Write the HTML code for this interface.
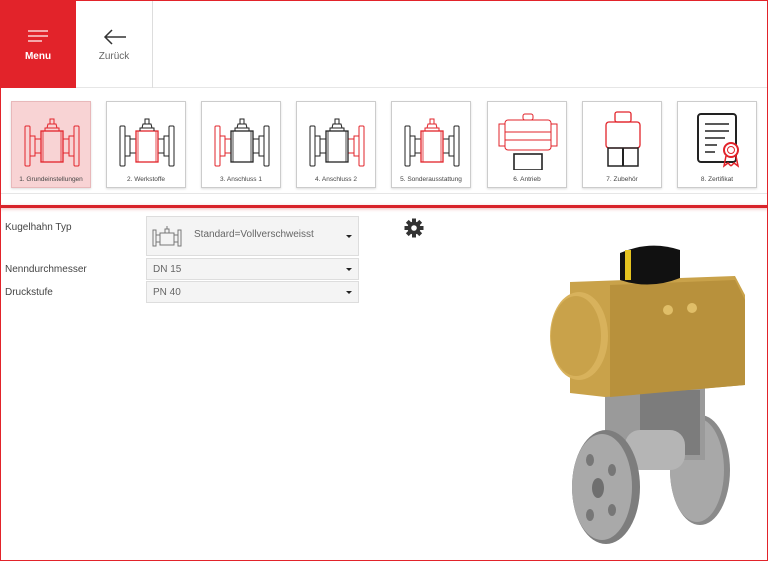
<!DOCTYPE html>
<html><head><meta charset="utf-8"><style>
*{box-sizing:border-box;margin:0;padding:0}
body{width:768px;height:561px;overflow:hidden;background:#fff;font-family:"Liberation Sans",sans-serif;position:relative}
.frame{position:absolute;left:0;top:0;width:768px;height:561px;border:1px solid #e2232a;pointer-events:none}
.hdr{position:absolute;left:0;top:0;width:768px;height:88px;border-bottom:1px solid #e6e6e6}
.menu{position:absolute;left:0;top:0;width:76px;height:88px;background:#e2232a;color:#fff;font-size:10px;font-weight:bold;text-align:center}
.back{position:absolute;left:76px;top:0;width:77px;height:88px;border-right:1px solid #ddd;text-align:center;color:#666;font-size:10px}
.tiles{position:absolute;left:0;top:88px;width:768px;height:106px;border-bottom:1px solid #e6e6e6}
.tile{position:absolute;top:13px;width:80px;height:87px;border:1px solid #ccc;background:#fff;box-shadow:0 1px 2px #ddd}
.tile.act{background:#f8d3d4;border-color:#e8b8ba}
.tile svg{position:absolute;left:10px;top:8px}
.tile span{position:absolute;left:0;right:0;bottom:4px;text-align:center;font-size:6.5px;color:#444}
.redline{position:absolute;left:0;top:205px;width:768px;height:3px;background:#d8232a;box-shadow:0 1px 3px rgba(200,0,0,.3)}
.lbl{position:absolute;left:5px;font-size:10px;color:#444}
.sel{position:absolute;left:146px;width:213px;background:#f4f4f4;border:1px solid #ddd;font-size:10px;color:#666}
.sel:after{content:"";position:absolute;right:6px;top:50%;margin-top:-1px;border:3px solid transparent;border-top:3px solid #222}
</style></head><body>
<div class="hdr">
 <div class="menu"><svg width="22" height="14" style="position:absolute;left:27px;top:29px"><path d="M1 2h20M1 7h20M1 12h14" stroke="#fff" stroke-width="1.6" opacity=".8"/></svg><div style="position:absolute;top:51px;width:76px">Menu</div></div>
 <div class="back"><svg width="24" height="16" style="position:absolute;left:27px;top:29px"><path d="M23 8H2M9 1L2 8l7 7" stroke="#333" stroke-width="1.5" fill="none"/></svg><div style="position:absolute;top:51px;width:76px">Zurück</div></div>
</div>
<svg width="0" height="0" style="position:absolute"><defs>
<g id="v"><rect x="3" y="16" width="5" height="40" rx="1" fill="none" stroke="var(--a)"/><path d="M8 26h5v20H8M13 29h6v14h-6" fill="none" stroke="var(--a)"/><rect x="52" y="16" width="5" height="40" rx="1" fill="none" stroke="var(--d)"/><path d="M52 26h-5v20h5M47 29h-6v14h6" fill="none" stroke="var(--d)"/><rect x="19" y="21" width="22" height="31" fill="none" stroke="var(--b)" stroke-width="1.3"/><path d="M21 21v31M39 21v31" stroke="var(--b)" stroke-width=".8"/><path d="M23 21v-3h14v3M25 18l1-4h8l1 4M28 14V9h4v5" fill="none" stroke="var(--c)"/></g>
</defs></svg>
<div class="tiles">
 <div class="tile act" style="left:11px"><svg width="60" height="60" style="--a:#e2232a;--b:#e2232a;--c:#e2232a;--d:#e2232a"><use href="#v"/></svg><span>1. Grundeinstellungen</span></div>
 <div class="tile" style="left:106px"><svg width="60" height="60" style="--a:#222;--b:#e2232a;--c:#222;--d:#222"><use href="#v"/></svg><span>2. Werkstoffe</span></div>
 <div class="tile" style="left:201px"><svg width="60" height="60" style="--a:#e2232a;--b:#222;--c:#222;--d:#222"><use href="#v"/></svg><span>3. Anschluss 1</span></div>
 <div class="tile" style="left:296px"><svg width="60" height="60" style="--a:#222;--b:#222;--c:#222;--d:#e2232a"><use href="#v"/></svg><span>4. Anschluss 2</span></div>
 <div class="tile" style="left:391px"><svg width="60" height="60" style="--a:#222;--b:#e2232a;--c:#e2232a;--d:#222"><use href="#v"/></svg><span>5. Sonderausstattung</span></div>
 <div class="tile" style="left:487px"><svg width="60" height="60"><g fill="none" stroke="#e2232a"><rect x="1" y="14" width="6" height="22"/><rect x="53" y="14" width="6" height="22"/><rect x="7" y="10" width="46" height="30" rx="3"/><path d="M7 22h46M7 30h46"/><rect x="25" y="4" width="10" height="6" rx="2"/></g><rect x="16" y="44" width="28" height="16" fill="none" stroke="#222" stroke-width="1.6"/></svg><span>6. Antrieb</span></div>
 <div class="tile" style="left:582px"><svg width="60" height="60"><g fill="none" stroke="#e2232a" stroke-width="1.3"><rect x="22" y="2" width="16" height="10" rx="2"/><rect x="13" y="12" width="34" height="26" rx="3"/></g><rect x="15" y="38" width="30" height="18" fill="none" stroke="#222" stroke-width="1.5"/><path d="M30 38v18" stroke="#222" stroke-width="2"/></svg><span>7. Zubehör</span></div>
 <div class="tile" style="left:677px"><svg width="60" height="60"><rect x="10" y="4" width="38" height="48" rx="3" fill="none" stroke="#222" stroke-width="2"/><path d="M17 14h24M17 21h24M17 28h20M17 35h12M17 42h10" stroke="#222" stroke-width="1.5"/><circle cx="43" cy="40" r="7" fill="#fff" stroke="#e2232a" stroke-width="2"/><circle cx="43" cy="40" r="3.5" fill="none" stroke="#e2232a"/><path d="M38 46l-2 10 4-3 3 3M48 46l2 10-4-3-3 3" fill="none" stroke="#e2232a" stroke-width="1.5"/></svg><span>8. Zertifikat</span></div>
</div>
<div class="redline"></div>
<div class="lbl" style="top:222px">Kugelhahn Typ</div>
<div class="sel" style="top:216px;height:40px"><svg width="30" height="26" style="position:absolute;left:5px;top:7px"><g fill="none" stroke="#777"><rect x="1" y="6" width="3" height="16"/><rect x="26" y="6" width="3" height="16"/><rect x="8" y="9" width="14" height="12"/><path d="M4 11h4M4 18h4M22 11h4M22 18h4M13 9V5h4v4M15 5V2"/></g></svg><span style="position:absolute;left:47px;top:12px">Standard=Vollverschweisst</span></div>
<div class="lbl" style="top:264px">Nenndurchmesser</div>
<div class="sel" style="top:258px;height:22px"><span style="position:absolute;left:6px;top:5px">DN 15</span></div>
<div class="lbl" style="top:287px">Druckstufe</div>
<div class="sel" style="top:281px;height:22px"><span style="position:absolute;left:6px;top:5px">PN 40</span></div>
<svg width="20" height="20" viewBox="0 0 20 20" style="position:absolute;left:404px;top:218px"><g fill="#333"><circle cx="10" cy="10" r="6.5"/><g id="t"><rect x="8" y="0.5" width="4" height="5"/><rect x="8" y="14.5" width="4" height="5"/></g><use href="#t" transform="rotate(45 10 10)"/><use href="#t" transform="rotate(90 10 10)"/><use href="#t" transform="rotate(135 10 10)"/></g><circle cx="10" cy="10" r="2.8" fill="#fff"/></svg>
<svg width="230" height="330" viewBox="540 230 230 330" style="position:absolute;left:540px;top:230px">
 <ellipse cx="700" cy="470" rx="30" ry="55" fill="#8a8a8a"/><ellipse cx="697" cy="470" rx="27" ry="52" fill="#a8a8a8"/>
 <rect x="605" y="385" width="100" height="75" fill="#9a9a9a"/><rect x="640" y="390" width="60" height="65" fill="#7c7c7c"/>
 <rect x="625" y="430" width="60" height="40" rx="15" fill="#b5b5b5"/>
 <ellipse cx="606" cy="487" rx="34" ry="57" fill="#7d7d7d"/><ellipse cx="602" cy="487" rx="30" ry="53" fill="#a9a9a9"/>
 <ellipse cx="598" cy="488" rx="6" ry="10" fill="#6f6f6f"/><ellipse cx="590" cy="460" rx="4" ry="6" fill="#777"/><ellipse cx="590" cy="515" rx="4" ry="6" fill="#777"/><ellipse cx="612" cy="470" rx="4" ry="6" fill="#777"/><ellipse cx="612" cy="510" rx="4" ry="6" fill="#777"/>
 <path d="M570 282 L735 276 L745 295 L745 385 L605 397 L570 393Z" fill="#c9a24a"/>
 <path d="M610 285 L735 280 L745 300 L745 385 L610 397Z" fill="#b8913c"/>
 <ellipse cx="579" cy="336" rx="29" ry="44" fill="#d8b25c"/><ellipse cx="576" cy="336" rx="25" ry="40" fill="#c9a24a"/>
 <circle cx="668" cy="310" r="5" fill="#e0be68"/><circle cx="692" cy="308" r="5" fill="#e0be68"/>
 <path d="M620 253 Q650 240 680 250 L680 278 Q650 290 620 280Z" fill="#111"/><rect x="625" y="250" width="6" height="30" fill="#e5c320"/>
</svg>
<div class="frame"></div>
</body></html>
